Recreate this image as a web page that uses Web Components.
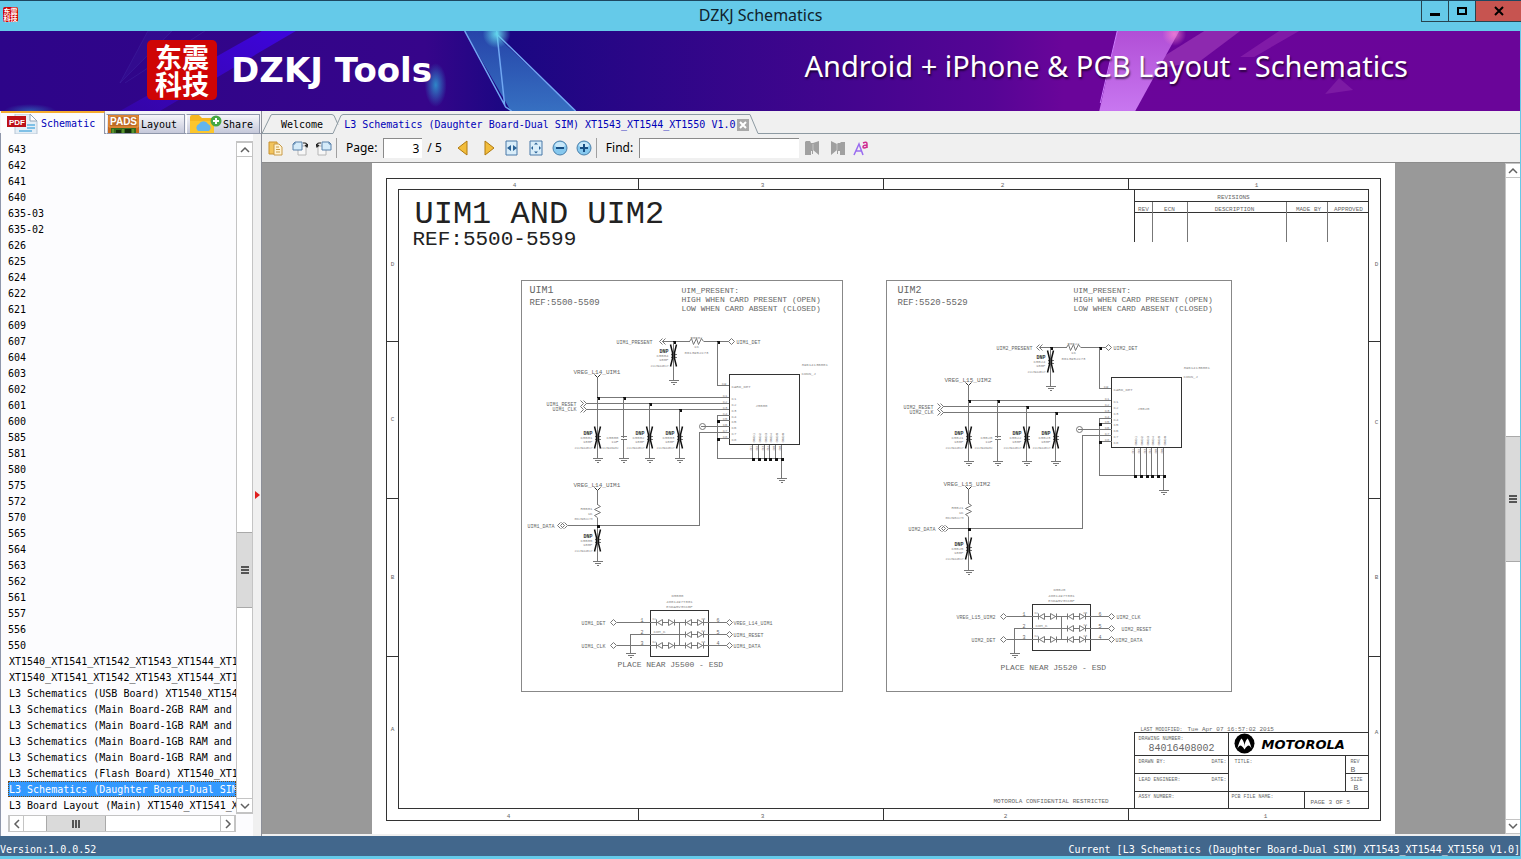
<!DOCTYPE html>
<html lang="en">
<head>
<meta charset="utf-8">
<title>DZKJ Schematics</title>
<style>
  html, body { margin: 0; height: 100%; }
  body { font-family: "DejaVu Sans Mono", "Liberation Mono", monospace; font-size: 10px; color: #000; overflow: hidden; }
</style>
</head>
<body>
<app-window></app-window>
<script>
const define = (name, html, setup) => {
  const tpl = document.createElement('template');
  tpl.innerHTML = html;
  customElements.define(name, class extends HTMLElement {
    constructor() {
      super();
      this.attachShadow({ mode: 'open' }).append(tpl.content.cloneNode(true));
    }
    connectedCallback() { if (setup) setup(this, this.shadowRoot); }
  });
};

/* ---------- red seal logo ---------- */
define('brand-seal', `
<style>
  :host { display: grid; place-items: center; flex: none; width: 70px; height: 60px; border-radius: 5px;
    background: #cf0505; color: #fff; font: 700 27px/27px "Noto Sans CJK SC", sans-serif; }
  :host([small]) { width: 15px; height: 15px; border-radius: 2px; font-size: 7px; line-height: 7px; }
  span { display: block; white-space: nowrap; }
</style>
<div><span>东震</span><span>科技</span></div>`);

/* ---------- title bar ---------- */
define('title-bar', `
<style>
  :host { display: grid; grid-template-columns: 1fr auto 1fr; height: 30px; border-top: 1px solid #1d4760; background: #65cae9; }
  brand-seal { margin: 6px 0 0 3px; }
  h1 { margin: 0; font: 400 16px/29px "Noto Sans", "Open Sans", sans-serif; color: #10222c; }
  .ctl { justify-self: end; display: flex; height: 21px; border: solid #27434f; border-width: 0 0 1px 1px; box-sizing: border-box; }
  button { width: 27px; padding: 0; border: 0; border-right: 1px solid #27434f; background: none; }
  button.x { width: 45px; border: 0; background: #c75450; }
  svg { display: block; margin: auto; }
</style>
<brand-seal small></brand-seal>
<h1>DZKJ Schematics</h1>
<div class="ctl">
  <button aria-label="Minimize"><svg width="12" height="12"><path d="M1 8h10v3H1z"/></svg></button>
  <button aria-label="Maximize"><svg width="12" height="12"><path d="M2 3h8v6H2z" fill="none" stroke="#000" stroke-width="2"/></svg></button>
  <button class="x" aria-label="Close"><svg width="12" height="12"><path d="M2 2l8 8M10 2l-8 8" stroke="#000" stroke-width="2"/></svg></button>
</div>`);

/* ---------- banner ---------- */
define('brand-banner', `
<style>
  :host { display: flex; align-items: center; position: relative; height: 80px; padding: 0 112px 0 147px; color: #fff; overflow: hidden; background: #31058b; }
  .bg { position: absolute; inset: 0; width: 100%; height: 100%; }
  brand-seal, strong, span { position: relative; }
  brand-seal, strong { margin-bottom: 2px; }
  strong { margin-left: 14px; font: 700 34px/40px "DejaVu Sans", sans-serif; }
  span { margin: 0 0 10px auto; font: 400 29px/40px "Noto Sans", "Open Sans", sans-serif; text-shadow: 1px 2px 2px #0009; white-space: nowrap; }
</style>
<svg class="bg" viewBox="0 0 1521 80" preserveAspectRatio="none" aria-hidden="true">
  <defs>
    <linearGradient id="b"><stop offset="0" stop-color="#2d0589"/><stop offset=".28" stop-color="#36058a"/><stop offset=".335" stop-color="#1a0782"/><stop offset=".42" stop-color="#2b0687"/><stop offset=".55" stop-color="#42058e"/><stop offset=".65" stop-color="#550595"/><stop offset=".7" stop-color="#6a059a"/><stop offset="1" stop-color="#6a0599"/></linearGradient>
    <linearGradient id="c" x2="0" y2="1"><stop offset="0" stop-color="#274fb0"/><stop offset="1" stop-color="#3b82cc"/></linearGradient>
    <linearGradient id="p" x2="0" y2="1"><stop offset="0" stop-color="#b14fd6"/><stop offset="1" stop-color="#c877f0"/></linearGradient>
    <linearGradient id="s" x1="1" x2="0" y2="1"><stop offset="0" stop-color="#3d05dc"/><stop offset="1" stop-color="#3d05dc" stop-opacity=".35"/></linearGradient>
    <radialGradient id="g"><stop offset="0" stop-color="#2f86c8"/><stop offset="1" stop-color="#2f86c8" stop-opacity="0"/></radialGradient>
    <radialGradient id="h"><stop offset="0" stop-color="#62d6ec"/><stop offset="1" stop-color="#62d6ec" stop-opacity="0"/></radialGradient>
    <radialGradient id="k"><stop offset="0" stop-color="#ff8ad2"/><stop offset="1" stop-color="#ff8ad2" stop-opacity="0"/></radialGradient>
  </defs>
  <path fill="url(#b)" d="M0 0h1521v80H0z"/>
  <path fill="url(#s)" d="M262 0h34L160 80h-40z"/>
  <path d="M148 0h24L120 52zM205 0L125 52" stroke="#4b39b0" stroke-opacity=".3" fill="#4030b0" fill-opacity=".15"/>
  <ellipse cx="30" cy="80" rx="26" ry="7" fill="url(#g)" opacity=".6"/>
  <ellipse cx="436" cy="54" rx="11" ry="22" fill="url(#g)"/>
  <path fill="url(#c)" d="M465 0h35l-3 5 79 75h-65l-5-9z" opacity=".85"/>
  <path d="M465 0l41 76 6 4M497 0l8 74M498 4l78 76" fill="none" stroke="#70a7f2" stroke-width="1.5"/>
  <circle cx="497" cy="3" r="14" fill="url(#h)"/>
  <path fill="#9632b4" d="M1205 0h36l-40 30-32 6-12-6z" opacity=".8"/>
  <path fill="#8a24ac" d="M1280 0h20l-45 26h-14z" opacity=".7"/>
  <path fill="#8524a8" d="M1340 47l14 12-28 4z" opacity=".7"/>
  <path fill="url(#p)" d="M1118 0h62l-44 80h-36z"/>
  <path d="M1118 0l-17 72" stroke="#cf80ff" fill="none"/>
  <circle cx="1175" cy="3" r="12" fill="url(#k)" opacity=".7"/>
</svg>
<brand-seal></brand-seal>
<strong>DZKJ Tools</strong>
<span>Android + iPhone &amp; PCB Layout - Schematics</span>`);

/* ---------- scroll bar: parts="before,thumb,after" are track shares ---------- */
define('scroll-bar', `
<style>
  :host { display: grid; flex: none; box-sizing: border-box; background: #fff; border: 1px solid #c4c4c4; --end: 15px; }
  button { padding: 0; border: 0 solid #c4c4c4; background: #fff; display: grid; place-items: center; min-width: 0; min-height: 0; }
  .thumb { background: #dadada; border: 0 solid #a9a9a9; display: grid; place-items: center; min-width: 0; min-height: 0; }
  .v { border-width: 1px 0; } .h { border-width: 0 1px; }
  .h svg { transform: rotate(-90deg); }
  svg { display: block; }
</style>
<button aria-label="Back"><svg width="10" height="8"><path d="M1 6l4-4 4 4" fill="none" stroke="#606060" stroke-width="1.5"/></svg></button>
<i></i><div class="thumb"><svg width="8" height="8"><path d="M0 1h8M0 4h8M0 7h8" stroke="#555" stroke-width="2" shape-rendering="crispEdges"/></svg></div><i></i>
<button aria-label="Forward"><svg width="10" height="8"><path d="M1 2l4 4 4-4" fill="none" stroke="#606060" stroke-width="1.5"/></svg></button>`,
(host, root) => {
  const [a, b, c] = host.getAttribute('parts').split(',');
  const tracks = `var(--end) ${a}fr ${b}fr ${c}fr var(--end)`;
  const flat = host.hasAttribute('horizontal');
  host.style[flat ? 'gridTemplateColumns' : 'gridTemplateRows'] = tracks;
  host.style[flat ? 'height' : 'width'] = flat ? '17px' : 'var(--bar, 17px)';
  root.querySelectorAll('button, .thumb').forEach(e => e.classList.add(flat ? 'h' : 'v'));
});

/* ---------- side panel ---------- */
const numbers = '643 642 641 640 635-03 635-02 626 625 624 622 621 609 607 604 603 602 601 600 585 581 580 575 572 570 565 564 563 562 561 557 556 550'.split(' ');
const files = [
  'XT1540_XT1541_XT1542_XT1543_XT1544_XT1', 'XT1540_XT1541_XT1542_XT1543_XT1544_XT1',
  'L3 Schematics (USB Board) XT1540_XT154', 'L3 Schematics (Main Board-2GB RAM and',
  'L3 Schematics (Main Board-1GB RAM and', 'L3 Schematics (Main Board-1GB RAM and',
  'L3 Schematics (Main Board-1GB RAM and', 'L3 Schematics (Flash Board) XT1540_XT1',
  'L3 Schematics (Daughter Board-Dual SIM', 'L3 Board Layout (Main) XT1540_XT1541_X'];

define('file-list', `
<style>
  :host { display: block; flex: 1; min-width: 0; overflow: hidden; }
  ul { margin: 0; padding: 0; list-style: none; }
  a { display: block; height: 16px; line-height: 18px; color: #000; text-decoration: none; white-space: pre; overflow: hidden; box-sizing: border-box; }
  a.file { padding-left: 1px; }
  a.on { background: #3399ff; color: #fff; outline: 1px dotted #7a4a10; outline-offset: -1px; }
</style>
<ul></ul>`, (host, root) => {
  const row = (t, cls) => `<li><a href="#" class="${cls}">${t}</a></li>`;
  root.querySelector('ul').innerHTML = numbers.map(n => row(n, '')).join('') +
    files.map(f => row(f, f.includes('Daughter') ? 'file on' : 'file')).join('');
});

define('side-tabs', `
<style>
  :host { display: flex; align-items: flex-end; gap: 1px; height: 23px; background: #f4f4f8; box-shadow: inset 0 -1px #8f97ab; padding-left: 1px; }
  button { display: flex; align-items: center; gap: 2px; height: 20px; padding: 0 4px 0 1px; border: 1px solid #8f97ab; border-left-color: #fff;
    background: linear-gradient(#f6f6fa, #c5c8da); font: inherit; color: #000; overflow: hidden; box-sizing: border-box; }
  button.on { height: 23px; width: 104px; padding-left: 6px; background: #fcfcfe; border-top: 2px solid #f5ab2e; border-bottom: 0; border-left: 0; color: #0000b8; }
  button.two { width: 79px; } button.three { width: 74px; padding-left: 3px; gap: 1px; }
  svg { display: block; flex: none; }
</style>
<button class="on"><svg width="32" height="20"><path d="M8 0h15l7 7v13H8z" fill="#e4eef6" stroke="#b9c7d6"/><path d="M23 0v7h7z" fill="#fff" stroke="#92a5b8"/><path d="M12 17h13M20 11h8M20 14h8" stroke="#7fc0e6" stroke-width="2"/><path d="M0 2h19v11H0z" fill="#bd1018"/><text x="2" y="11" font-family="Liberation Sans" font-weight="700" font-size="8" fill="#fff">PDF</text></svg>Schematic</button>
<button class="two"><svg width="31" height="19"><path d="M0 0h31v19H0z" fill="#c8691b"/><path d="M1 1h29v11H1z" fill="#bd6a24" stroke="#ef9c46"/><path d="M3 13h25v6H3z" fill="#346b1e"/><path d="M8 15h5v4H8zM17 14h6v5h-6z" fill="#142c0c"/><path d="M5 14v4M15 14v4M25 14v4" stroke="#7cba3c"/><text x="2" y="10" font-family="Liberation Sans" font-weight="700" font-size="10" fill="#fff">PADS</text></svg>Layout</button>
<button class="three"><svg width="32" height="19"><path d="M0 2q0-2 2-2h7l3 3h10q2 0 2 2v14H0z" fill="#f6b61e"/><path d="M0 6h24v13H0z" fill="#fcc62c"/><path d="M8 16a4 4 0 0 1 1-7 5 5 0 0 1 9 0 4 4 0 0 1 1 7z" fill="#62b5ee"/><circle cx="26" cy="6" r="5.5" fill="#46a845"/><path d="M26 3v6M23 6h6" stroke="#fff" stroke-width="2"/></svg>Share</button>`);

define('side-panel', `
<style>
  :host { display: flex; flex-direction: column; width: 262px; flex: none; background: #fcfcfe; border-right: 1px solid #8d9099; box-sizing: border-box; }
  .body { flex: 1; min-height: 0; display: flex; border-left: 1px solid #8f97ab; }
  .box { flex: 1; min-width: 0; display: flex; flex-direction: column; padding: 7px 0 4px 7px; }
  .list { flex: 1; min-height: 0; display: flex; }
  scroll-bar[horizontal] { margin: 1px 17px 0 0; }
  .split { width: 8px; background: #f0f0f0; display: grid; place-items: center; padding-top: 20px; }
  svg { display: block; }
</style>
<side-tabs></side-tabs>
<div class="body">
  <div class="box">
    <div class="list"><file-list></file-list><scroll-bar parts="375,76,190"></scroll-bar></div>
    <scroll-bar horizontal parts="22,60,114"></scroll-bar>
  </div>
  <div class="split"><svg width="5" height="8"><path d="M0 0l5 4-5 4z" fill="#e02020"/></svg></div>
</div>`);

/* ---------- document tabs ---------- */
define('doc-tabs', `
<style>
  :host { display: flex; align-items: flex-end; height: 23px; background: #f0f0f0; }
  div { display: flex; align-items: center; height: 20px; border-top: 1px solid #8d9aa2; box-sizing: border-box; white-space: nowrap; }
  .off { border-bottom: 1px solid #8d9aa2; padding: 0 9px; }
  .on { gap: 1px; padding-left: 1px; }
  a { color: #000; text-decoration: none; }
  .on a { color: #0000b8; }
  .rest { flex: 1; border-top: 0; border-bottom: 1px solid #8d9aa2; }
  button { width: 12px; height: 12px; padding: 0; border: 0; background: #a9a9a9; display: grid; place-items: center; }
  svg { display: block; flex: none; fill: none; stroke: #8d9aa2; }
  button svg { stroke: #fff; stroke-width: 2; }
</style>
<svg width="10" height="20"><path d="M0 19.5L9 1l1-.5M0 19.500H10"/></svg>
<div class="off"><a href="#">Welcome</a></div>
<svg width="11" height="20"><path d="M0 .5l2 1 4 9M0 19.500h1L9 1.500l2-1"/></svg>
<div class="on"><a href="#">L3 Schematics (Daughter Board-Dual SIM) XT1543_XT1544_XT1550 V1.0</a><button aria-label="Close tab"><svg width="8" height="8"><path d="M1 1l6 6M7 1L1 7"/></svg></button></div>
<svg width="10" height="20"><path d="M0 .5h1L9 19.500h1"/></svg>
<div class="rest"></div>`);

/* ---------- viewer tool bar ---------- */
const ico = (name, body) => `<button aria-label="${name}"><svg width="16" height="16" viewBox="0 0 16 16">${body}</svg></button>`;
const sheetIcon = '<path d="M6 6h8v9H6z" fill="#f7f7f7" stroke="#b6b6b6"/><path d="M3 2h7v8H1V4z" fill="#d5ebf9" stroke="#5b82ab"/><path d="M3 2v2H1" fill="none" stroke="#5b82ab"/>';
define('view-toolbar', `
<style>
  :host { display: flex; align-items: center; height: 28px; padding-left: 6px; background: #f0f0f0; font: 12px/20px "Noto Sans", "Open Sans", sans-serif; }
  button { width: 16px; height: 16px; margin-right: 8px; padding: 0; border: 0; background: none; flex: none; }
  svg { display: block; }
  hr { width: 1px; height: 20px; margin: 0 9px 0 -4px; border: 0; background: #a0a0a0; }
  input { height: 20px; box-sizing: border-box; padding: 0 3px; border: 0; border-left: 1px solid #8a8a8a; border-top: 1px solid #8a8a8a; background: #fff; font: inherit; outline: 0; }
  .page { width: 39px; margin: 0 5px 0 6px; text-align: right; }
  .find { width: 160px; margin: 0 5px 0 6px; }
  output { margin-right: 13px; white-space: pre; }
  .wide { display: flex; margin-right: -3px; } .wide button { margin-right: 10px; }
  .near { display: flex; }
</style>
${ico('Open', '<path d="M1 2h8l1 12H1z" fill="#f2c45c" stroke="#c89232"/><path d="M6 4h5l3 3v8H6z" fill="#fff3d2" stroke="#c89a48"/><path d="M8 7h3M8 9.500h4M8 12h4" stroke="#c89a48"/>')}
${ico('Rotate left', sheetIcon + '<path d="M11 3h2q2 0 2 3M13 5l2 2 1-3" fill="none" stroke="#222" stroke-width="1.2"/>')}
${ico('Rotate right', '<g transform="matrix(-1 0 0 1 16 0)">' + sheetIcon + '<path d="M11 3h2q2 0 2 3M13 5l2 2 1-3" fill="none" stroke="#222" stroke-width="1.2"/></g>')}
<hr>
<label for="page">Page:</label><input class="page" id="page" value="3"><output for="page">/ 5</output>
<span class="wide">
${ico('Previous page', '<path d="M12 1v14L3 8z" fill="#f2bd3c" stroke="#b07a10"/>')}
${ico('Next page', '<path d="M4 1v14l9-7z" fill="#f2bd3c" stroke="#b07a10"/>')}
</span>
<span class="near">
${ico('Fit width', '<path d="M2 1h11v14H2z" fill="#d9edf9" stroke="#4878a8"/><path d="M7 5v6L3 8zM9 5v6l4-3z" fill="#2b6296"/>')}
${ico('Fit page', '<path d="M2 1h12v14H2z" fill="#d9edf9" stroke="#4878a8"/><path d="M6 4.500l2-2 2 2zM6 11.500l2 2 2-2zM5 6L3 8l2 2zM11 6l2 2-2 2z" fill="#2b6296"/>')}
${ico('Zoom out', '<circle cx="8" cy="8" r="7" fill="#86c8ee" stroke="#4a7faa"/><ellipse cx="8" cy="5" rx="5" ry="3" fill="#c9e8f9"/><path d="M4 8h8" stroke="#174f84" stroke-width="2"/>')}
${ico('Zoom in', '<circle cx="8" cy="8" r="7" fill="#86c8ee" stroke="#4a7faa"/><ellipse cx="8" cy="5" rx="5" ry="3" fill="#c9e8f9"/><path d="M4 8h8M8 4v8" stroke="#174f84" stroke-width="2"/>')}
</span>
<hr>
<label for="find">Find:</label><input class="find" id="find">
<span class="wide">
${ico('Find previous', '<path d="M1 2l1-1h4l1 2h2l6-2v14l-6-5v4H8v-3H7v4H1z" fill="#a0a0a0"/><path d="M9 4v6" stroke="#c4c4c4"/>')}
${ico('Find next', '<path d="M1 1l6 3 1-1h2l1-1h4v13h-5v-4H8v3H7v-4l-6 5z" fill="#a0a0a0"/><path d="M7 4v6" stroke="#c4c4c4"/>')}
</span>
${ico('Match case', '<path d="M1 15L6 4l4 11M3 11h6" fill="none" stroke="#9a6cf0" stroke-width="1.5"/><path d="M10 3q4-2 4 1v4M14 5q-4 0-4 2t4 0" fill="none" stroke="#d02a90" stroke-width="1.500"/>')}`);

/* ---------- schematic drawing helpers ---------- */
const line = (...p) => `<polyline points="${p.join(' ')}"/>`;
const text = (x, y, size, str, anchor = 'start', extra = '') =>
  `<text x="${x}" y="${y}" font-size="${size}" text-anchor="${anchor}" ${extra || (size < 5 ? 'class="f"' : '')}>${str}</text>`;
const dot = (x, y) => `<rect class="dot" x="${x - 1}" y="${y - 1}" width="3" height="3"/>`;
const ground = (x, y) => line(x - 5, y, x + 5, y) + line(x - 3, y + 2, x + 3, y + 2) + line(x - 1, y + 4, x + 1, y + 4);
const port = (x, y) => `<path class="s w" d="M${x - 3} ${y}l3-3 3 3-3 3z"/>`;
const chev = (x, y, dir) => [0, 3].map(o => `<path class="s" d="M${x + o} ${y - 3}L${x + o + 3 * dir} ${y}L${x + o} ${y + 3}"/>`).join('');
const supply = (x, y) => `<path class="k" d="M${x - 3} ${y - 3}l3 3 3-3"/>`;
const resV = (x, y) => `<path class="s" d="M${x} ${y}l3 2-6 3 6 3-6 3 3 2"/>`;
const resH = (x, y) => `<path class="s" d="M${x} ${y}l2-3 2 6 3-6 2 6 3-6 2 3"/>`;
const plates = (x, y) => line(x - 3, y - 1, x + 3, y - 1) + line(x - 3, y + 2, x + 3, y + 2);
const capText = (x, y, name, val, part) => text(x - 5, y, 4, name, 'end') + text(x - 5, y + 4, 4, val, 'end') + text(x - 5, y + 10, 3, part, 'end');
const unfit = (x, y, name) => plates(x, y) +
  `<path class="x" d="M${x - 3} ${y - 11}l2 8v6l-2 8M${x + 3} ${y - 11}l-2 8v6l2 8"/>` +
  text(x - 5, y - 3, 5, 'DNP', 'end', 'class="b"') + capText(x, y + 1, name, '100P', '2113944B17');

const circuit = o => {
  const { v, bus: b, c, sim, reg, in: n } = o;
  const pin = i => b + [0, 6, 12, 18, 23, 29, 35, 41][i];
  const col = c - 12, gy = b + o.drop, loop = c - o.loop;
  let s = '';
  /* card-present row */
  s += text(o.px - o.pt, o.pr + 2, 5, `${sim}_PRESENT`, 'end') + chev(o.px - 11, o.pr, -1) + line(o.px - 12, o.pr, o.px + 16, o.pr) + dot(o.px, o.pr) +
    resH(o.px + 16, o.pr) + line(o.px + 30, o.pr, o.px + 55, o.pr) + dot(col, o.pr) + port(o.px + 58, o.pr) + text(o.px + 63, o.pr + 2, 5, `${sim}_DET`) +
    text(o.px + 23, o.pr - 3, 4, o.rTop, 'middle') + text(o.px + 23, o.pr + 6, 4, '1K', 'middle') + text(o.px + 23, o.pr + 12, 4, '0613952X73', 'middle') +
    line(o.px, o.pr, o.px, o.pr + 39) + unfit(o.px, o.pr + 14, o.caps[0]) + ground(o.px, o.pr + 39) +
    line(col, o.pr, col, b - 12, c, b - 12);
  /* supply, bus lines and bypass capacitors */
  s += text(o.vt, o.top, 6, reg) + supply(v, o.top + 4) + line(v, o.top + 4, v, 458) + line(v, b, c, b) +
    line(n - 12, b + 6, c, b + 6) + line(n - 12, b + 12, c, b + 12) +
    text(n - 21, b + 8, 5, `${sim}_RESET`, 'end') + text(n - 21, b + 13, 5, `${sim}_CLK`, 'end') + chev(n - 17, b + 6, 1) + chev(n - 17, b + 12, 1);
  o.cx.forEach((x, i) => {
    const y = b + [0, 0, 6, 12][i];
    s += dot(x, y) + line(x, y, x, o.gnd) + ground(x, o.gnd);
    s += i === 1 ? '<rect class="gap" x="' + (x - 1) + '" y="437" width="3" height="2"/>' + plates(x, 437) + capText(x, 438, o.caps[2], '1UF', '2113946A02') : unfit(x, 437, o.caps[[1, 0, 3, 4][i]]);
  });
  /* connector */
  s += `<rect class="k" x="${c}" y="${b - 23}" width="70" height="70"/>` + text(c + 26, b + 9, 4, o.j) +
    text(c + 2, b - 10, 4, 'CARD_DET') + text(c - 3, b - 13, 4, 'C9', 'end') + text(c + 72, b - 32, 4, '3961413B001') + text(c + 72, b - 23, 4, 'CONN_J');
  for (let i = 0; i < 8; i++) s += text(c + 2, pin(i) + 2, 4, 'C' + (i + 1)) + text(c - 2, pin(i) - 1, 4, 'C' + (i + 1), 'end');
  s += line(c, pin(3), col, pin(3), col, gy, c + 52, gy, c + 52, gy + o.tail) + line(col, pin(4), c, pin(4)) + line(col, pin(7), c, pin(7)) +
    dot(col, pin(4)) + dot(col, pin(7)) + ground(c + 52, gy + o.tail);
  for (let i = 0; i < 6; i++) {
    const x = c + [23, 29, 35, 40, 46, 52][i];
    s += line(x, b + 47, x, gy) + dot(x, gy) +
      text(x + 2, b + 45, 4, 'GND' + (i + 1), 'start', `class="f" transform="rotate(-90 ${x + 2} ${b + 45})"`) +
      text(x - 1, b + 53, 4, 'G' + (i + 1), 'start', `class="f" transform="rotate(-90 ${x - 1} ${b + 53})"`);
  }
  s += `<circle class="s" cx="${loop}" cy="${pin(5)}" r="3"/>` + line(loop - 2, pin(5), c, pin(5)) + line(c, pin(6), loop + 3 - o.back, pin(6), loop + 3 - o.back, o.data, v - 30 + o.dx, o.data);
  /* data line pull-up */
  s += text(o.vt - o.back2, o.top2, 6, reg) + supply(v, o.top2 + 4) + line(v, o.top2 + 4, v, o.top2 + 18) + resV(v, o.top2 + 18) + line(v, o.top2 + 31, v, o.gnd2) +
    dot(v, o.data) + text(v - 5, o.top2 + 23, 4, o.rSide, 'end') + text(v - 5, o.top2 + 28, 4, '1K', 'end') + text(v - 5, o.top2 + 33, 3, '0613952X73', 'end') +
    text(v - 43 + o.dx, o.data + 2, 5, `${sim}_DATA`, 'end') + chev(v - 37 + o.dx, o.data, -1) + chev(v - 36 + o.dx, o.data, 1) +
    unfit(v, o.cap2, o.caps[5]) + ground(v, o.gnd2);
  return s;
};

/* two clamp diodes facing away from each other */
const clampPair = (x, y, n1, n2) =>
  `<path class="d" d="M${x} ${y - 3}v6M${x + 6} ${y - 3}v6L${x + 1} ${y}zM${x + 12} ${y - 3}v6l5-3zM${x + 18} ${y - 3}v6"/>` + (n1 ? text(x - 4, y - 3, 3, n1) : '') + (n2 ? text(x + 16, y - 3, 3, n2) : '');
const esd = (x, y, lo, ref, left, right) => {
  const rows = [y + 12, y + 24, y + 35], l = x + lo, g = x - 20 + (lo ? 2 : 0);
  let s = `<rect class="k" x="${x}" y="${y}" width="58" height="46"/>` + line(x + 29, rows[0], x + 29, rows[2]);
  s += text(x + 27, y - 14, 4, ref, 'middle') + text(x + 29, y - 8, 4, '4801497T001', 'middle') + text(x + 29, y - 3, 4, 'ESDA5V3SCBP', 'middle');
  s += line(l - 34, rows[0], x + 76, rows[0]) + line(g, y + 43, g, rows[1], x + 76, rows[1]) + line(l - 34, rows[2], x + 76, rows[2]) + ground(g, y + 43 + (lo ? 6 : 0)) + line(g, y + 43, g, y + 43 + (lo ? 6 : 0));
  s += clampPair(x + 6, rows[0], 'K1') + clampPair(x + 35, rows[0], '', 'K5') + clampPair(x + 35, rows[1], '', 'K4') + clampPair(x + 6, rows[2], 'K2') + clampPair(x + 35, rows[2], '', 'K3') + text(x + 3, y + 22, 4, 'COM_K');
  [0, 1, 2].forEach(i => { s += text(x - 10, rows[i] - 1, 5, i + 1) + text(x + 66, rows[i] - 1, 5, 6 - i) + port(x + 79, rows[i]) + text(x + 83 + right[i][1], rows[i] + 2, 5, right[i][0]); });
  s += port(l - 37, rows[0]) + text(l - 45, rows[0] + 2, 5, left[0], 'end') + port(l - 37, rows[2]) + text(l - 45, rows[2] + 2, 5, left[1], 'end');
  return s;
};
const panel = (x, w, name, ref, tx, nx) => `<rect class="p" x="${x}" y="280" width="${w}" height="411"/>` +
  text(nx, 292, 10, name) + text(nx, 304, 9, ref) +
  ['UIM_PRESENT:', 'HIGH WHEN CARD PRESENT (OPEN)', 'LOW WHEN CARD ABSENT (CLOSED)'].map((t, i) => text(tx, 292 + [0, 9, 18][i], 8, t)).join('');

const drawing = () => {
  let s = '<rect class="k" x="386" y="178" width="994" height="642"/><rect class="k" x="398" y="189" width="970" height="619"/>';
  s += '<g class="k">' + [638, 883, 1128].map(x => line(x, 178, x, 189) + line(x, 808, x, 820)).join('') +
    [341, 498, 656].map(y => line(386, y, 398, y) + line(1368, y, 1380, y)).join('') + '</g>';
  [[514, 508], [762, 762], [1002, 1005], [1256, 1265]].forEach(([a, b], i) => { s += text(a, 186, 6, 4 - i, 'middle') + text(b, 817, 6, 4 - i, 'middle'); });
  [[263, 263], [418, 421], [576, 576], [728, 731]].forEach(([a, b], i) => { s += text(392, a + 2, 6, 'DCBA'[i], 'middle') + text(1376, b + 2, 6, 'DCBA'[i], 'middle'); });
  s += text(414, 222, 32, 'UIM1 AND UIM2', 'start', 'class="t"') + text(412, 244, 21, 'REF:5500-5599', 'start', 'class="t"');
  /* revision table */
  s += '<g class="k">' + line(1134, 189, 1134, 241) + line(1134, 201, 1368, 201) + line(1134, 212, 1368, 212) + '</g>' + [1152, 1187, 1286, 1327].map(x => line(x, 201, x, 241)).join('') +
    text(1233, 198, 6, 'REVISIONS', 'middle');
  [[1143, 'REV'], [1169, 'ECN'], [1234, 'DESCRIPTION'], [1308, 'MADE BY'], [1348, 'APPROVED']].forEach(([x, t]) => s += text(x, 210, 6, t, 'middle'));
  s += panel(521, 321, 'UIM1', 'REF:5500-5509', 681, 529) + panel(886, 345, 'UIM2', 'REF:5520-5529', 1073, 897);
  s += circuit({ sim: 'UIM1', reg: 'VREG_L14_UIM1', v: 597, in: 597, pt: 21, vt: 573, top: 373, bus: 397, c: 729, px: 673, pr: 341, drop: 61, tail: 20, loop: 27, back: 6, back2: 0, cx: [597, 623, 649, 679], gnd: 458,
    data: 525, top2: 486, cap2: 540, gnd2: 561, dx: 0, j: 'J5500', rTop: 'R5502', rSide: 'R5501', caps: ['C5504', 'C5501', 'C5500', 'C5502', 'C5503', 'C5505'] });
  s += circuit({ sim: 'UIM2', reg: 'VREG_L15_UIM2', v: 968, in: 954, pt: 18, vt: 944, top: 381, bus: 400, c: 1111, px: 1050, pr: 347, drop: 75, tail: 15, loop: 32, back: 0, back2: 1, cx: [968, 997, 1026, 1055], gnd: 461,
    data: 528, top2: 485, cap2: 548, gnd2: 570, dx: 10, j: 'J5520', rTop: 'R5522', rSide: 'R5521', caps: ['C5524', 'C5521', 'C5520', 'C5522', 'C5523', 'C5525'] });
  s += esd(650, 610, 0, 'D5500', ['UIM1_DET', 'UIM1_CLK'], [['VREG_L14_UIM1', 0], ['UIM1_RESET', 0], ['UIM1_DATA', 0]]) +
    esd(1032, 604, 8, 'D5520', ['VREG_L15_UIM2', 'UIM2_DET'], [['UIM2_CLK', 1], ['UIM2_RESET', 6], ['UIM2_DATA', 0]]) +
    text(617, 666, 8, 'PLACE NEAR J5500 - ESD') + text(1000, 669, 8, 'PLACE NEAR J5520 - ESD');
  /* title block */
  s += '<g class="k">' + line(1134, 808, 1134, 732, 1368, 732) + line(1134, 755, 1368, 755) + line(1134, 773, 1228, 773) + line(1345, 773, 1368, 773) + line(1134, 791, 1368, 791) +
    line(1228, 732, 1228, 808) + line(1345, 755, 1345, 791) + line(1304, 791, 1304, 808) + '</g>';
  s += [[1140, 730, 5, 'LAST MODIFIED:'], [1187, 730, 6, 'Tue Apr 07 16:57:02 2015'], [1138, 739, 5, 'DRAWING NUMBER:'], [1148, 750, 10, '84016408002'], [1138, 762, 5, 'DRAWN BY:'], [1211, 762, 5, 'DATE:'],
    [1234, 762, 5, 'TITLE:'], [1350, 762, 5, 'REV'], [1350, 771, 8, 'B'], [1138, 780, 5, 'LEAD ENGINEER:'], [1211, 780, 5, 'DATE:'], [1350, 780, 5, 'SIZE'], [1353, 789, 8, 'B'],
    [1138, 797, 5, 'ASSY NUMBER:'], [1231, 797, 5, 'PCB FILE NAME:'], [1310, 803, 6, 'PAGE 3 OF 5'], [993, 802, 6, 'MOTOROLA CONFIDENTIAL RESTRICTED']].map(a => text(...a)).join('');
  s += '<circle cx="1244" cy="743" r="10" fill="#000"/><path d="M1237 748c1-5 3-9 4-10 2 2 3 5 3 8 0-3 1-6 3-8 1 1 3 5 4 10-1-2-2-3-3-3-1 0-2 1-4 4-2-3-3-4-4-4-1 0-2 1-3 3z" fill="#fff"/>' +
    '<text class="moto" x="1261" y="748" font-size="13">MOTOROLA</text>';
  return s;
};

define('schematic-sheet', `
<style>
  :host { display: block; background: #fff; }
  svg { display: block; width: 100%; }
  text { font-family: "Liberation Mono", monospace; fill: #666; stroke: none; }
  .t { fill: #222; } .b { fill: #333; font-weight: 700; } .f { fill: #888; }
  .moto { font-family: "DejaVu Sans", sans-serif; font-weight: 700; font-style: italic; fill: #000; }
  rect, polyline { fill: none; stroke: #777; stroke-width: 1; shape-rendering: crispEdges; }
  rect.k, .k polyline { stroke: #333; }
  path.k { stroke: #333; fill: none; }
  .p { stroke: #888; }
  .s { fill: none; stroke: #777; }
  .w { fill: #fff; }
  .d { fill: #fff; stroke: #777; }
  .x { fill: none; stroke: #111; stroke-width: 1.5; }
  .dot { fill: #111; stroke: none; }
  .gap { fill: #fff; stroke: none; }
</style>
<svg viewBox="371.5 162.5 1023 671" role="img" aria-label="UIM1 and UIM2 schematic"></svg>`,
(host, root) => { root.querySelector('svg').innerHTML = drawing(); });

/* ---------- viewer ---------- */
define('doc-viewer', `
<style>
  :host { display: flex; flex-direction: column; flex: 1; min-width: 0; background: #f0f0f0; }
  .stage { flex: 1; min-height: 0; display: flex; background: #999; border-top: 1px solid #8c8c8c; margin-bottom: 2px; }
  .canvas { flex: 1; min-width: 0; padding: 0 110px; overflow: hidden; }
  scroll-bar { --bar: 15px; --end: 15px; border-width: 0 0 0 1px; }
</style>
<doc-tabs></doc-tabs>
<view-toolbar></view-toolbar>
<div class="stage"><div class="canvas"><schematic-sheet></schematic-sheet></div><scroll-bar parts="258,127,257"></scroll-bar></div>`);

/* ---------- status bar ---------- */
define('status-bar', `
<style>
  :host { display: flex; justify-content: space-between; align-items: flex-end; height: 20px; line-height: 12px; background: #42678c; color: #fff; white-space: nowrap; }
  span:first-child { color: #06142a; }
</style>
<span>Version:1.0.0.52</span><span>Current [L3 Schematics (Daughter Board-Dual SIM) XT1543_XT1544_XT1550 V1.0]</span>`);

/* ---------- window ---------- */
define('app-window', `
<style>
  :host { display: flex; flex-direction: column; height: 100vh; box-sizing: border-box; border-bottom: 3px solid #65cae9; background: #65cae9; }
  .frame { flex: 1; min-height: 0; display: flex; flex-direction: column; margin-right: 1px; }
  main { flex: 1; min-height: 0; display: flex; }
</style>
<title-bar></title-bar>
<div class="frame">
  <brand-banner></brand-banner>
  <main><side-panel></side-panel><doc-viewer></doc-viewer></main>
  <status-bar></status-bar>
</div>`);
</script>
</body>
</html>
